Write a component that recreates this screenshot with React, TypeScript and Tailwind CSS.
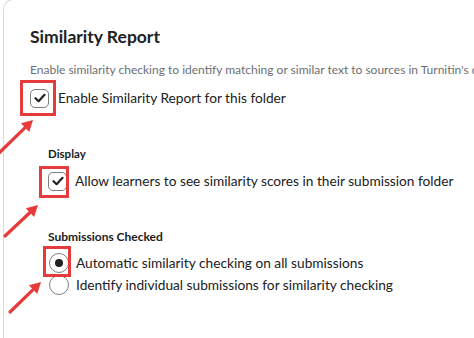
import React from "react";

function Check() {
  return (
    <span className="flex h-[19px] w-[19px] shrink-0 items-center justify-center rounded-[5px] border border-[#7a7f83] bg-white">
      <svg width="12" height="10" viewBox="0 0 12 10" fill="none">
        <path d="M1.5 5.2 L4.6 8.2 L10.5 1.8" stroke="#202122" strokeWidth="2.2" strokeLinecap="round" strokeLinejoin="round" />
      </svg>
    </span>
  );
}

function Radio({ on }: { on?: boolean }) {
  return (
    <span className="flex h-[20px] w-[20px] shrink-0 items-center justify-center rounded-full border border-[#7a7f83] bg-white">
      {on && <span className="h-[8px] w-[8px] rounded-full bg-[#202122]" />}
    </span>
  );
}

function Arrow({ x1, y1, x2, y2 }: { x1: number; y1: number; x2: number; y2: number }) {
  const a = Math.atan2(y2 - y1, x2 - x1);
  const L = 11;
  const W = 6;
  const bx = x2 - Math.cos(a) * L;
  const by = y2 - Math.sin(a) * L;
  const px = -Math.sin(a) * W;
  const py = Math.cos(a) * W;
  return (
    <g>
      <line x1={x1} y1={y1} x2={bx} y2={by} stroke="#e63b3b" strokeWidth="3.2" strokeLinecap="round" />
      <polygon points={`${x2},${y2} ${bx + px},${by + py} ${bx - px},${by - py}`} fill="#e63b3b" />
    </g>
  );
}

export default function App() {
  return (
    <div className="relative h-[338px] w-[474px] overflow-hidden bg-white font-['Lato',sans-serif] text-[#202122]">
      <div className="ml-[3px] mt-[-1px] h-[345px] rounded-tl-[10px] border-l border-t border-[#d8dce2] pl-[26px] pt-[25px]">
        <h2 className="text-[17.5px] font-bold leading-[24px]">Similarity Report</h2>
        <p className="mt-[12px] whitespace-nowrap text-[12px] leading-[18px] text-[#6b6f73]">
          Enable similarity checking to identify matching or similar text to sources in Turnitin's database
        </p>
        <label className="mt-[9px] flex h-[20px] items-center gap-[9px] text-[13.7px] leading-[20px]">
          <Check />
          <span>Enable Similarity Report for this folder</span>
        </label>

        <div className="pl-[18px]">
          <h3 className="mt-[38px] text-[11.5px] font-bold leading-[16px]">Display</h3>
          <label className="mt-[9px] flex h-[20px] items-center gap-[8px] text-[13.7px] leading-[20px]">
            <Check />
            <span className="whitespace-nowrap">Allow learners to see similarity scores in their submission folder</span>
          </label>

          <h3 className="mt-[38px] text-[12px] font-bold leading-[16px]">Submissions Checked</h3>
          <div className="mt-[8px] flex flex-col gap-[2px] pl-[1px]">
            <label className="flex h-[20px] items-center gap-[7px] text-[13.7px] leading-[20px]">
              <Radio on />
              <span>Automatic similarity checking on all submissions</span>
            </label>
            <label className="flex h-[20px] items-center gap-[7px] text-[13.7px] leading-[20px]">
              <Radio />
              <span>Identify individual submissions for similarity checking</span>
            </label>
          </div>
        </div>
      </div>

      <svg className="pointer-events-none absolute left-0 top-0" width="474" height="338" viewBox="0 0 474 338">
        <rect x="21.5" y="81.5" width="33" height="33" fill="none" stroke="#e63b3b" strokeWidth="3" />
        <rect x="40.5" y="167.5" width="27" height="29" fill="none" stroke="#e63b3b" strokeWidth="3" />
        <rect x="44.5" y="247.5" width="25" height="28" fill="none" stroke="#e63b3b" strokeWidth="3" />
        <Arrow x1={-1} y1={153} x2={33} y2={120} />
        <Arrow x1={5} y1={236} x2={38} y2={205} />
        <Arrow x1={10} y1={312} x2={41} y2={282} />
      </svg>
    </div>
  );
}
